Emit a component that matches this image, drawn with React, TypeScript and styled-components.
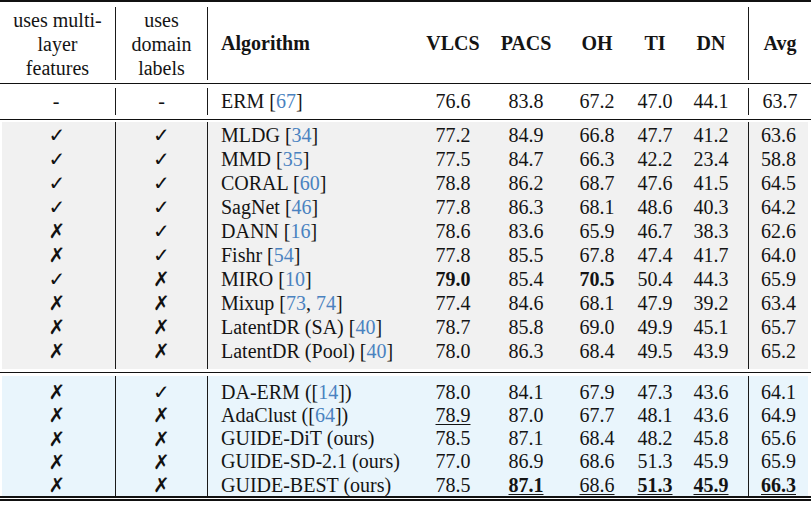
import React from "react";
import styled, { createGlobalStyle } from "styled-components";

const GlobalStyle = createGlobalStyle`
    html, body {
        margin: 0;
        padding: 0;
        background: #ffffff;
    }
`;

const colsFor = (l: number, r: number) =>
    `${115 - l}px 92px 210px 72px 74px 68px 48px 69px ${63 - r}px`;

type Mark = "yes" | "no" | "dash";
type Num = { v: string; b?: boolean; u?: boolean };
type Ref = { t: string; cite?: boolean };
type RowData = { m1: Mark; m2: Mark; name: Ref[]; nums: Num[] };

const n = (s: string): Num => {
    // "*" bold, "_" underline
    return { v: s.replace(/[*_]/g, ""), b: s.includes("*"), u: s.includes("_") };
};
const row = (m1: Mark, m2: Mark, name: Ref[], nums: string): RowData => ({
    m1,
    m2,
    name,
    nums: nums.split(" ").map(n),
});

const erm = row("dash", "dash", [{ t: "ERM [" }, { t: "67", cite: true }, { t: "]" }], "76.6 83.8 67.2 47.0 44.1 63.7");

const grayRows: RowData[] = [
    row("yes", "yes", [{ t: "MLDG [" }, { t: "34", cite: true }, { t: "]" }], "77.2 84.9 66.8 47.7 41.2 63.6"),
    row("yes", "yes", [{ t: "MMD [" }, { t: "35", cite: true }, { t: "]" }], "77.5 84.7 66.3 42.2 23.4 58.8"),
    row("yes", "yes", [{ t: "CORAL [" }, { t: "60", cite: true }, { t: "]" }], "78.8 86.2 68.7 47.6 41.5 64.5"),
    row("yes", "yes", [{ t: "SagNet [" }, { t: "46", cite: true }, { t: "]" }], "77.8 86.3 68.1 48.6 40.3 64.2"),
    row("no", "yes", [{ t: "DANN [" }, { t: "16", cite: true }, { t: "]" }], "78.6 83.6 65.9 46.7 38.3 62.6"),
    row("no", "yes", [{ t: "Fishr [" }, { t: "54", cite: true }, { t: "]" }], "77.8 85.5 67.8 47.4 41.7 64.0"),
    row("yes", "no", [{ t: "MIRO [" }, { t: "10", cite: true }, { t: "]" }], "*79.0 85.4 *70.5 50.4 44.3 65.9"),
    row(
        "no",
        "no",
        [{ t: "Mixup [" }, { t: "73", cite: true }, { t: ", " }, { t: "74", cite: true }, { t: "]" }],
        "77.4 84.6 68.1 47.9 39.2 63.4"
    ),
    row("no", "no", [{ t: "LatentDR (SA) [" }, { t: "40", cite: true }, { t: "]" }], "78.7 85.8 69.0 49.9 45.1 65.7"),
    row("no", "no", [{ t: "LatentDR (Pool) [" }, { t: "40", cite: true }, { t: "]" }], "78.0 86.3 68.4 49.5 43.9 65.2"),
];

const blueRows: RowData[] = [
    row("no", "yes", [{ t: "DA-ERM ([" }, { t: "14", cite: true }, { t: "])" }], "78.0 84.1 67.9 47.3 43.6 64.1"),
    row("no", "no", [{ t: "AdaClust ([" }, { t: "64", cite: true }, { t: "])" }], "_78.9 87.0 67.7 48.1 43.6 64.9"),
    row("no", "no", [{ t: "GUIDE-DiT (ours)" }], "78.5 87.1 68.4 48.2 45.8 65.6"),
    row("no", "no", [{ t: "GUIDE-SD-2.1 (ours)" }], "77.0 86.9 68.6 51.3 45.9 65.9"),
    row("no", "no", [{ t: "GUIDE-BEST (ours)" }], "78.5 *_87.1 _68.6 *_51.3 *_45.9 *_66.3"),
];

export default function App() {
    return (
        <>
            <GlobalStyle />
            <Table>
                <Rule $h={2} />
                <Section $pt={5} $pb={3}>
                    <Row $cols={colsFor(0, 0)} $h={73}>
                        <Cell $align="center">
                            <HeadText>
                                uses multi-
                                <br />
                                layer
                                <br />
                                features
                            </HeadText>
                        </Cell>
                        <Cell $align="center" $sep>
                            <HeadText>
                                uses
                                <br />
                                domain
                                <br />
                                labels
                            </HeadText>
                        </Cell>
                        <Cell $align="left" $sep $pl={13}>
                            <Bold>Algorithm</Bold>
                        </Cell>
                        <Cell $align="center">
                            <Bold>VLCS</Bold>
                        </Cell>
                        <Cell $align="center">
                            <Bold>PACS</Bold>
                        </Cell>
                        <Cell $align="center">
                            <Bold>OH</Bold>
                        </Cell>
                        <Cell $align="center">
                            <Bold>TI</Bold>
                        </Cell>
                        <Cell $align="center" $pr={5}>
                            <Bold>DN</Bold>
                        </Cell>
                        <Cell $align="center" $sep>
                            <Bold>Avg</Bold>
                        </Cell>
                    </Row>
                </Section>
                <Rule $h={1} />
                <Section $pt={4} $pb={4}>
                    <DataRow data={erm} cols={colsFor(0, 0)} h={27} />
                </Section>
                <Rule $h={1} />
                <Section $bg="#f1f1f1" $mt={2} $ml={2} $mr={3}>
                    {grayRows.map((r, i) => (
                        <DataRow
                            key={i}
                            data={r}
                            cols={colsFor(2, 3)}
                            h={24}
                            pt={i === 0 ? 1 : 0}
                            pb={i === grayRows.length - 1 ? 6 : 0}
                        />
                    ))}
                </Section>
                <Rule $h={1} $mt={3} />
                <Section $bg="#e9f5fc" $mt={3} $ml={2} $mr={3}>
                    {blueRows.map((r, i) => (
                        <DataRow key={i} data={r} cols={colsFor(2, 3)} h={23.3} pt={i === 0 ? 4 : 0} />
                    ))}
                </Section>
                <Rule $h={2} />
                <Rule $h={1.5} $mt={1} />
            </Table>
        </>
    );
}

const markChar = (m: Mark) => (m === "yes" ? "✓" : m === "no" ? "✗" : "-");

const DataRow = ({
    data,
    cols,
    h,
    pt = 0,
    pb = 0,
}: {
    data: RowData;
    cols: string;
    h: number;
    pt?: number;
    pb?: number;
}) => (
    <Row $cols={cols} $h={h + pt + pb} $pt={pt} $pb={pb}>
        <Cell $align="center" $pr={3}>
            <MarkText $dash={data.m1 === "dash"}>{markChar(data.m1)}</MarkText>
        </Cell>
        <Cell $align="center" $sep>
            <MarkText $dash={data.m2 === "dash"}>{markChar(data.m2)}</MarkText>
        </Cell>
        <Cell $align="left" $sep $pl={13}>
            <span>
                {data.name.map((p, i) => (p.cite ? <Cite key={i}>{p.t}</Cite> : <span key={i}>{p.t}</span>))}
            </span>
        </Cell>
        {data.nums.map((x, i) => (
            <Cell key={i} $align="center" $sep={i === 5} $pr={i === 4 ? 5 : 0}>
                <Value $b={x.b} $u={x.u}>
                    {x.v}
                </Value>
            </Cell>
        ))}
    </Row>
);

const Table = styled.div`
    width: 811px;
    display: flex;
    flex-direction: column;
    font-family: "Liberation Serif", "Times New Roman", serif;
    font-size: 20px;
    color: #141414;
`;

const Rule = styled.div<{ $h: number; $mt?: number }>`
    height: ${(p) => p.$h}px;
    margin-top: ${(p) => p.$mt || 0}px;
    background: #111111;
`;

const Section = styled.div<{ $bg?: string; $pt?: number; $pb?: number; $mt?: number; $ml?: number; $mr?: number }>`
    display: flex;
    flex-direction: column;
    background: ${(p) => p.$bg || "transparent"};
    padding: ${(p) => p.$pt || 0}px 0 ${(p) => p.$pb || 0}px;
    margin: ${(p) => p.$mt || 0}px ${(p) => p.$mr || 0}px 0 ${(p) => p.$ml || 0}px;
`;

const Row = styled.div<{ $cols: string; $h: number; $pt?: number; $pb?: number }>`
    display: grid;
    grid-template-columns: ${(p) => p.$cols};
    height: ${(p) => p.$h}px;
    & > div {
        padding-top: ${(p) => p.$pt || 0}px;
        padding-bottom: ${(p) => p.$pb || 0}px;
    }
`;

const Cell = styled.div<{ $align: "left" | "center"; $sep?: boolean; $pl?: number; $pr?: number }>`
    display: flex;
    align-items: center;
    justify-content: ${(p) => (p.$align === "left" ? "flex-start" : "center")};
    border-left: ${(p) => (p.$sep ? "1px solid #1a1a1a" : "none")};
    padding-left: ${(p) => p.$pl || 0}px;
    padding-right: ${(p) => p.$pr || 0}px;
    box-sizing: border-box;
    white-space: nowrap;
    min-width: 0;
`;

const HeadText = styled.div`
    text-align: center;
    line-height: 24px;
`;

const Bold = styled.span`
    font-weight: 700;
`;

const MarkText = styled.span<{ $dash?: boolean }>`
    font-family: ${(p) => (p.$dash ? `"Liberation Serif", serif` : `"DejaVu Sans", sans-serif`)};
    font-size: 20px;
    font-weight: ${(p) => (p.$dash ? 400 : 700)};
    color: #111111;
`;

const Cite = styled.span`
    color: #4a82c0;
`;

const Value = styled.span<{ $b?: boolean; $u?: boolean }>`
    font-weight: ${(p) => (p.$b ? 700 : 400)};
    text-decoration: ${(p) => (p.$u ? "underline" : "none")};
    text-decoration-thickness: 1px;
    text-underline-offset: 2px;
`;
